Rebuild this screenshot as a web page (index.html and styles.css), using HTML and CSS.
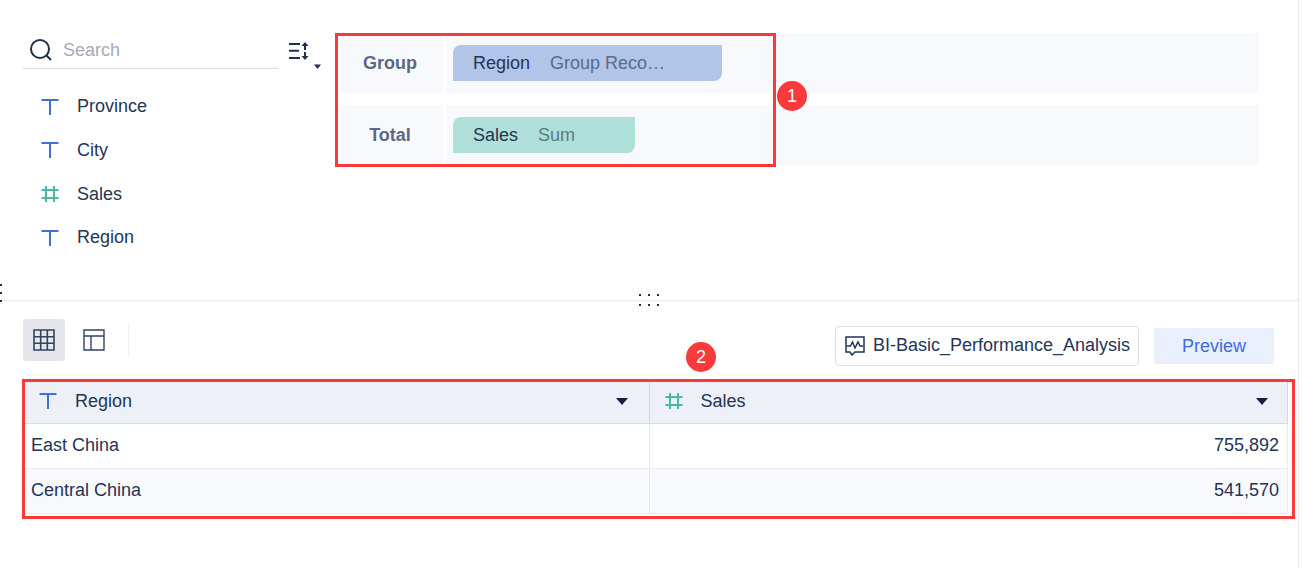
FILE: index.html
```html
<!DOCTYPE html>
<html lang="en">
<head>
<meta charset="utf-8">
<title>Group summary</title>
<link rel="stylesheet" href="styles.css">
</head>
<body>
<div class="page">
  <section class="top">
    <aside class="fields">
      <div class="fields-head">
        <div class="search">
          <svg class="search-icon" width="22" height="22" viewBox="0 0 22 22"><circle cx="10" cy="10" r="9" fill="none" stroke="#1f2f4d" stroke-width="2"/><path d="M16.5 16.5L21 21" stroke="#1f2f4d" stroke-width="2" fill="none"/></svg>
          <span class="search-text">Search</span>
        </div>
        <svg class="sort-icon" width="34" height="30" viewBox="0 0 34 30"><path d="M0 2H11M0 8.700H10M0 16H11" stroke="#1f2f4d" stroke-width="2" fill="none"/><path d="M16 2V8M16 10V16" stroke="#1f2f4d" stroke-width="2" fill="none"/><path d="M16 0L19.500 4H12.500ZM16 18L12.500 14H19.500Z" fill="#1f2f4d"/><path d="M25 22.500H32L28.500 27Z" fill="#1f2f4d"/></svg>
      </div>
      <ul class="field-list">
        <li class="field"><svg class="type-icon" width="18" height="16" viewBox="0 0 18 16"><path d="M0.5 1H17.500M9 1V16" stroke="#3f6fdc" stroke-width="2" fill="none"/></svg>Province</li>
        <li class="field"><svg class="type-icon" width="18" height="16" viewBox="0 0 18 16"><path d="M0.5 1H17.500M9 1V16" stroke="#3f6fdc" stroke-width="2" fill="none"/></svg>City</li>
        <li class="field"><svg class="type-icon" width="18" height="16" viewBox="0 0 18 16"><path d="M0.500 4H17.500M0.500 12H17.500M5 0V16M13 0V16" stroke="#45b8a8" stroke-width="2" fill="none"/></svg>Sales</li>
        <li class="field"><svg class="type-icon" width="18" height="16" viewBox="0 0 18 16"><path d="M0.5 1H17.500M9 1V16" stroke="#3f6fdc" stroke-width="2" fill="none"/></svg>Region</li>
      </ul>
    </aside>
    <div class="config">
      <div class="config-row">
        <div class="config-label">Group</div>
        <div class="config-body"><div class="pill pill-blue"><span class="pill-name">Region</span><span class="pill-meta">Group Reco…</span></div></div>
      </div>
      <div class="config-row">
        <div class="config-label">Total</div>
        <div class="config-body"><div class="pill pill-green"><span class="pill-name">Sales</span><span class="pill-meta">Sum</span></div></div>
      </div>
    </div>
  </section>

  <section class="bottom">
    <div class="toolbar">
      <div class="views">
        <button class="view view-active"><svg width="22" height="22" viewBox="0 0 22 22"><path d="M1 1H21V21H1ZM1 7.700H21M1 14.300H21M7.700 1V21M14.300 1V21" fill="none" stroke="#33435f" stroke-width="1.600"/></svg></button>
        <button class="view"><svg width="22" height="22" viewBox="0 0 22 22"><path d="M1 1H21V21H1ZM1 7H21M8 7V21" fill="none" stroke="#33435f" stroke-width="1.400"/></svg></button>
        <span class="views-divider"></span>
      </div>
      <div class="actions">
        <div class="source"><svg width="20" height="20" viewBox="0 0 20 20"><path d="M1 1H19V16H10L7 19L5 16H1Z M2 10L5.500 10L7.500 6L10 12L13 6L15 10L18 10" fill="none" stroke="#1f3556" stroke-width="1.500"/></svg><span>BI-Basic_Performance_Analysis</span></div>
        <button class="preview">Preview</button>
      </div>
    </div>
    <table class="grid">
      <colgroup><col class="col-a"><col></colgroup>
      <thead>
        <tr>
          <th class="th-a"><div class="th-inner"><svg width="18" height="16" viewBox="0 0 18 16"><path d="M0.5 1H17.500M9 1V16" stroke="#3f6fdc" stroke-width="2" fill="none"/></svg><span>Region</span><i class="caret"></i></div></th>
          <th class="th-b"><div class="th-inner"><svg width="18" height="16" viewBox="0 0 18 16"><path d="M0.500 4H17.500M0.500 12H17.500M5 0V16M13 0V16" stroke="#45b8a8" stroke-width="2" fill="none"/></svg><span>Sales</span><i class="caret"></i></div></th>
        </tr>
      </thead>
      <tbody>
        <tr><td>East China</td><td class="num">755,892</td></tr>
        <tr class="alt"><td>Central China</td><td class="num">541,570</td></tr>
      </tbody>
    </table>
  </section>

  <div class="grip-v"><b></b><b></b><b></b></div>
  <div class="grip-h"><b></b><b></b><b></b><b></b><b></b><b></b></div>
  <div class="note note-1"></div>
  <div class="note note-2"></div>
  <div class="badge badge-1">1</div>
  <div class="badge badge-2">2</div>
</div>
</body>
</html>
```
FILE: styles.css
```css
* { box-sizing: border-box; }
html, body { margin: 0; padding: 0; background: #fff; }
body { font-family: "Liberation Sans", Arial, sans-serif; font-size: 18px; color: #243555; }
.page { position: relative; width: 1299px; height: 568px; border-right: 1px solid #e6e8f0; overflow: hidden; }
.top { display: flex; height: 301px; padding-top: 32px; border-bottom: 1px solid #e6e8f0; }
.fields { width: 335px; padding-left: 23px; }
.fields-head { display: flex; align-items: flex-start; }
.search { display: flex; align-items: center; width: 255px; height: 37px; border-bottom: 1px solid #d9dde8; padding: 0 0 0 7px; }
.search-icon { flex: none; margin-right: 11px; }
.search-text { color: #a3abbb; }
.sort-icon { margin: 10px 0 0 11px; }
.field-list { list-style: none; margin: 13px 0 0; padding: 0 0 0 18px; }
.field { display: flex; align-items: center; height: 43.67px; }
.type-icon { margin-right: 18px; flex: none; }
.config { width: 924px; padding-top: 1px; display: flex; flex-direction: column; gap: 12px; }
.config-row { display: flex; height: 60px; background: #f8f9fd; }
.config-label { width: 111px; display: flex; align-items: center; justify-content: center; font-weight: 700; color: #5b6880; border-right: 3px solid #fff; padding-left: 2px; }
.config-body { flex: 1; display: flex; align-items: center; padding-left: 7px; }
.pill { display: flex; align-items: center; height: 36px; padding-left: 20px; border-radius: 8px 0 8px 0; }
.pill-blue { width: 269px; background: #b0c5e8; }
.pill-green { width: 182px; background: #aedfd9; }
.pill-name { margin-right: 20px; }
.pill-meta { color: #5b6b88; }
.pill-green .pill-meta { color: #5a7c84; }
.toolbar { display: flex; justify-content: space-between; height: 81px; padding: 18px 24px 0 23px; }
.views { display: flex; align-items: center; height: 42px; }
.view { display: flex; align-items: center; justify-content: center; width: 42px; height: 42px; padding: 0; border: 0; background: none; border-radius: 3px; margin-right: 8px; }
.view-active { background: #e4e6eb; }
.views-divider { width: 1px; height: 30px; background: #eceef3; margin-left: 5px; }
.actions { display: flex; align-items: center; gap: 15px; height: 40px; margin-top: 7px; }
.source { display: flex; align-items: center; gap: 8px; width: 304px; height: 40px; padding: 0 0 2px 9px; border: 1px solid #dcdfe8; border-radius: 4px; white-space: nowrap; }
.source svg { margin-top: 2px; }
.preview { width: 120px; height: 36px; border: 0; border-radius: 3px; background: #e9effb; font: inherit; color: #3d6be0; }
.grid { width: 1263px; margin-left: 25px; table-layout: fixed; border-collapse: collapse; }
.col-a { width: 624px; }
.grid th { height: 41px; padding: 0; background: #edf0f6; font-weight: 400; text-align: left; border-bottom: 1px solid #d9dce4; border-right: 1px solid #d5d8e0; }
.th-inner { display: flex; align-items: center; padding: 0 21px 2px 14px; gap: 18px; }
.th-b .th-inner { padding: 0 19px 2px 15px; }
.th-inner span { flex: 1; }
.caret { width: 0; height: 0; border-left: 6px solid transparent; border-right: 6px solid transparent; border-top: 7px solid #14213f; }
.grid td { height: 45px; padding: 0 8px 0 6px; border-bottom: 1px solid #e6e9f2; border-right: 1px solid #e6e9f2; }
.grid .alt td { background: #f8f9fd; }
.grid .num { text-align: right; }
.grip-v { position: absolute; left: 0; top: 284px; display: flex; flex-direction: column; gap: 6px; }
.grip-v b, .grip-h b { width: 2px; height: 2px; background: #1f2f4d; }
.grip-h { position: absolute; left: 639px; top: 294px; width: 20px; display: grid; grid-template-columns: repeat(3, 2px); justify-content: space-between; row-gap: 8px; }
.note { position: absolute; border: 3px solid #f93a3a; }
.note-1 { left: 335px; top: 33px; width: 441px; height: 134px; }
.note-2 { left: 22px; top: 379px; width: 1273px; height: 140px; }
.badge { position: absolute; width: 30px; height: 30px; border-radius: 50%; background: #f93a3a; color: #fff; font-size: 18px; display: flex; align-items: center; justify-content: center; }
.badge-1 { left: 777px; top: 81px; }
.badge-2 { left: 686px; top: 342px; }
```
